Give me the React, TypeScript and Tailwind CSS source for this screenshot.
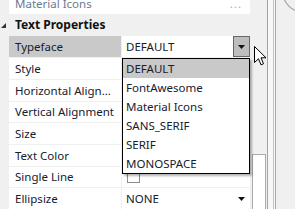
import React from "react";

const rows = [
  { label: "Style", value: "" },
  { label: "Horizontal Align...", value: "" },
  { label: "Vertical Alignment", value: "" },
  { label: "Size", value: "" },
  { label: "Text Color", value: "" },
  { label: "Single Line", value: "check" },
  { label: "Ellipsize", value: "NONE" },
];

const options = ["DEFAULT", "FontAwesome", "Material Icons", "SANS_SERIF", "SERIF", "MONOSPACE"];

function Tri({ className = "" }: { className?: string }) {
  return (
    <svg width="7" height="4" viewBox="0 0 7 4" className={className}>
      <path d="M0 0H7L3.5 4Z" fill="#111" />
    </svg>
  );
}

function Row({ label, children, selected }: { label: string; children?: React.ReactNode; selected?: boolean }) {
  return (
    <div className="flex h-[21px]">
      <div className="w-[9px] bg-[#f0f0f0]" />
      <div className={`w-[112px] flex items-center pl-[6px] ${selected ? "bg-[#c9c9c9]" : "bg-white"}`}>
        <span className="whitespace-nowrap">{label}</span>
      </div>
      <div className="w-px bg-[#f0f0f0]" />
      <div className="flex-1 bg-white flex items-center pl-[4px] relative">{children}</div>
    </div>
  );
}

export default function App() {
  return (
    <div
      className="relative w-[295px] h-[209px] overflow-hidden bg-[#f0f0f0] flex text-[11.5px] text-[#16202e]"
      style={{ fontFamily: '"Noto Sans", "Open Sans", sans-serif' }}
    >
      {/* property grid */}
      <div className="w-[250px] flex flex-col gap-px -mt-[7px] shrink-0">
        <div className="flex h-[21px]">
          <div className="w-[9px] bg-[#f0f0f0]" />
          <div className="flex-1 bg-white flex items-center pl-[6px] pr-[8px] justify-between text-[#6a7b8f]">
            <span>Material Icons</span>
            <span className="text-[#a4aebb] tracking-[1px]">...</span>
          </div>
        </div>
        <div className="flex h-[21px] items-center">
          <svg width="5" height="5" viewBox="0 0 5 5" className="ml-[1px] mr-[9px]">
            <path d="M5 0V5H0Z" fill="#333" />
          </svg>
          <span className="font-bold text-[#111] text-[12px]">Text Properties</span>
        </div>
        <Row label="Typeface" selected>
          <span>DEFAULT</span>
          <div className="absolute right-0 top-0 w-[17px] h-[21px] bg-[#bdbdbd] border border-[#676767] flex items-center justify-center">
            <Tri />
          </div>
        </Row>
        {rows.map((r) => (
          <Row key={r.label} label={r.label}>
            {r.value === "check" && <div className="w-[13px] h-[13px] border border-[#8c8c8c] bg-white ml-[1px]" />}
            {r.value === "NONE" && (
              <div className="flex-1 flex items-center justify-between pr-[5px]">
                <span>NONE</span>
                <Tri />
              </div>
            )}
          </Row>
        ))}
      </div>

      {/* right strip */}
      <div className="flex-1 flex">
        <div className="w-[17px] flex flex-col">
          <div className="h-[154px]" />
          <div className="flex-1 ml-[2px] mr-px border-l border-t border-r border-[#ababab] bg-white" />
        </div>
        <div className="w-px bg-[#a3a3a3]" />
        <div className="w-[5px] bg-[#f7f7f7]" />
        <div className="w-px bg-[#c4c4c4]" />
        <div className="w-px bg-[#f7f7f7]" />
        <div className="w-px bg-[#a8a8a8]" />
        <div className="flex-1 relative bg-[#f0f0f0]">
          <svg width="19" height="209" viewBox="0 0 19 209" className="block">
            <circle cx="27" cy="-8" r="20" fill="none" stroke="#a3a3a3" strokeWidth="1.2" />
          </svg>
        </div>
      </div>

      {/* open dropdown */}
      <div className="absolute left-[122px] top-[58px] w-[128px] border border-black bg-white shadow-[2px_2px_2px_rgba(0,0,0,0.3)]">
        {options.map((o, i) => (
          <div key={o} className={`h-[19px] flex items-center pl-[3px] ${i === 0 ? "bg-[#c9c9c9]" : ""}`}>
            {o}
          </div>
        ))}
      </div>

      {/* mouse cursor */}
      <svg width="13" height="20" viewBox="0 0 13 20" className="absolute left-[254px] top-[46px]">
        <path d="M0.5 0.5V16.5L4.5 12.8L7 18.8L9.5 17.8L7 11.8H12Z" fill="#fff" stroke="#000" strokeWidth="1" strokeLinejoin="round" />
      </svg>
    </div>
  );
}
